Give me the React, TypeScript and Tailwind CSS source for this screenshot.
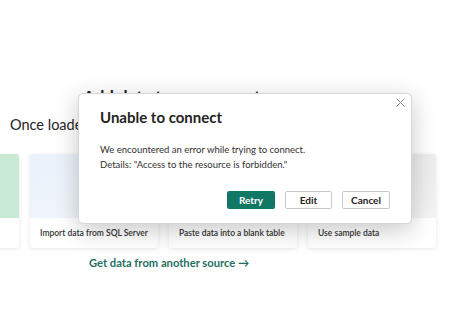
import React from "react";

const font = { fontFamily: 'Lato, "Noto Sans", Arial, sans-serif' };

function Card({ label, top }: { label: string; top: string }) {
  return (
    <div className="w-[128px] shrink-0 flex flex-col rounded-[3px] bg-white shadow-[0_1px_4px_rgba(0,0,0,0.10)] overflow-hidden">
      <div className={`h-[64px] ${top}`} />
      <div className="h-[30px] flex items-center pl-[10px] text-[8.5px] font-semibold text-[#333] whitespace-nowrap">
        {label}
      </div>
    </div>
  );
}

export default function App() {
  return (
    <div className="relative w-[474px] h-[313px] bg-white overflow-hidden" style={font}>
      <div className="flex flex-col pt-[86px]">
        <div className="ml-[83px] text-[17px] leading-[22px] font-bold text-[#252423] whitespace-nowrap">
          Add data to your report
        </div>
        <div className="ml-[10px] mt-[7px] text-[14.5px] leading-[20px] text-[#252423] whitespace-nowrap">
          Once loaded, your data will appear in the Data pane.
        </div>
        <div className="flex gap-[11px] ml-[-109px] mt-[19px]">
          <Card label="Import data from Excel" top="bg-[#c8ead5]" />
          <Card label="Import data from SQL Server" top="bg-gradient-to-br from-[#eaf1fb] to-[#f4f7fb]" />
          <Card label="Paste data into a blank table" top="bg-[#f1f1f1]" />
          <Card label="Use sample data" top="bg-gradient-to-b from-[#ececec] to-[#f4f4f4]" />
        </div>
        <div className="ml-[89px] mt-[7px] text-[11.2px] leading-[16px] font-bold text-[#1f6f62] whitespace-nowrap">
          Get data from another source →
        </div>
      </div>

      <div className="absolute left-[78px] top-[93px] w-[334px] h-[131px] bg-white rounded-[5px] border border-[#d6d6d6] shadow-[0_6px_24px_rgba(0,0,0,0.22)] flex flex-col pl-[21px] pr-[21px]">
        <button className="absolute right-[3px] top-[0px] w-[16px] h-[16px] flex items-center justify-center text-[#8a8a8a]">
          <svg width="9" height="9" viewBox="0 0 9 9" fill="none" stroke="currentColor" strokeWidth="1">
            <path d="M0.5 0.5 L8.5 8.5 M8.5 0.5 L0.5 8.5" />
          </svg>
        </button>
        <div className="mt-[13px] text-[15px] leading-[20px] font-bold text-[#252423]">Unable to connect</div>
        <div className="mt-[15px] text-[9.5px] leading-[15px] text-[#323130]">
          <div>We encountered an error while trying to connect.</div>
          <div>Details: "Access to the resource is forbidden."</div>
        </div>
        <div className="mt-[19px] flex justify-end gap-[10px]">
          <button className="w-[48px] h-[18px] rounded-[2px] bg-[#117865] text-white text-[10px] font-bold flex items-center justify-center">
            Retry
          </button>
          <button className="w-[47px] h-[18px] rounded-[2px] bg-white border border-[#c8c8c8] text-[#252423] text-[10px] font-bold flex items-center justify-center">
            Edit
          </button>
          <button className="w-[48px] h-[18px] rounded-[2px] bg-white border border-[#c8c8c8] text-[#252423] text-[10px] font-bold flex items-center justify-center">
            Cancel
          </button>
        </div>
      </div>
    </div>
  );
}
